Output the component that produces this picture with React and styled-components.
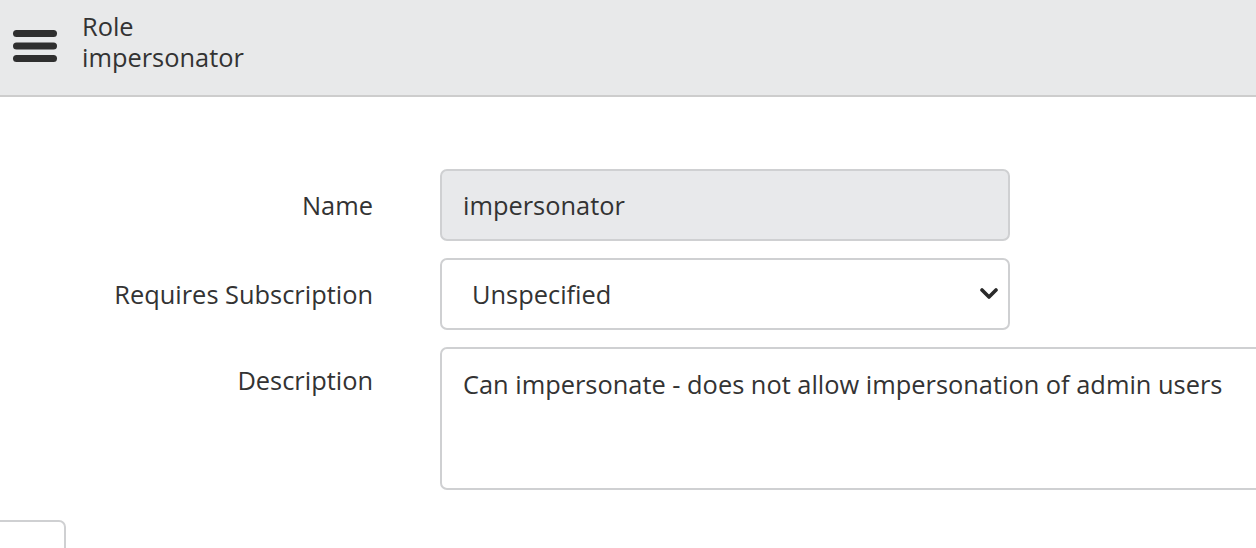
import React from 'react'
import styled, { createGlobalStyle } from 'styled-components'

const GlobalStyle = createGlobalStyle`
  html, body {
    margin: 0;
    padding: 0;
    background: #fff;
    overflow: hidden;
  }
  body {
    font-family: "Open Sans", "Liberation Sans", sans-serif;
    color: #333;
  }
`

// hamburger drawn as three rounded bars
const MenuIcon = () => (
  <svg width="46" height="36" viewBox="0 0 46 36">
    <rect x="1" y="2" width="44" height="7" rx="3.5" fill="#2f2f2f" />
    <rect x="1" y="14.5" width="44" height="7" rx="3.5" fill="#2f2f2f" />
    <rect x="1" y="27" width="44" height="7" rx="3.5" fill="#2f2f2f" />
  </svg>
)

const Chevron = () => (
  <svg width="18" height="12" viewBox="0 0 18 12">
    <path d="M2 2 L9 9 L16 2" fill="none" stroke="#2a2a2a" strokeWidth="3.6" strokeLinecap="round" strokeLinejoin="round" />
  </svg>
)

export default function App() {
  return (
    <Page>
      <GlobalStyle />
      <Header>
        <MenuButton>
          <MenuIcon />
        </MenuButton>
        <Titles>
          <Title>Role</Title>
          <Title>impersonator</Title>
        </Titles>
      </Header>
      <Form>
        <Row>
          <Label>Name</Label>
          <Field disabled>impersonator</Field>
        </Row>
        <Row>
          <Label>Requires Subscription</Label>
          <Select>
            <span>Unspecified</span>
            <Chevron />
          </Select>
        </Row>
        <Row top>
          <Label top>Description</Label>
          <TextArea>Can impersonate - does not allow impersonation of admin users</TextArea>
        </Row>
      </Form>
      <Footer>
        <SaveButton />
      </Footer>
    </Page>
  )
}

const Page = styled.div`
  width: 1256px;
  height: 548px;
  overflow: hidden;
`

const Header = styled.header`
  height: 95px;
  background: #e8e9ea;
  border-bottom: 2px solid #cdcdcd;
  display: flex;
  align-items: center;
  padding-left: 12px;
`

const MenuButton = styled.div`
  display: flex;
  align-items: center;
  margin-right: 24px;
  margin-top: -4px;
`

const Titles = styled.div`
  display: flex;
  flex-direction: column;
  margin-top: -12px;
`

const Title = styled.div`
  font-size: 25.4px;
  line-height: 31px;
  color: #333;
`

const Form = styled.div`
  padding-top: 72px;
  display: flex;
  flex-direction: column;
  gap: 17px;
`

const Row = styled.div`
  display: grid;
  grid-template-columns: 373px 1fr;
  column-gap: 67px;
  align-items: ${p => (p.top ? 'start' : 'center')};
`

const Label = styled.label`
  text-align: right;
  font-size: 25.4px;
  color: #333;
  padding-top: ${p => (p.top ? '16px' : '0')};
`

const Field = styled.div`
  width: 570px;
  height: 72px;
  box-sizing: border-box;
  border: 2px solid #cfd0d2;
  border-radius: 7px;
  background: ${p => (p.disabled ? '#e8e9eb' : '#fff')};
  display: flex;
  align-items: center;
  padding-left: 21px;
  font-size: 25.4px;
  color: #333;
`

const Select = styled(Field)`
  justify-content: space-between;
  padding-left: 30px;
  padding-right: 10px;
`

const TextArea = styled.div`
  width: 900px;
  height: 143px;
  box-sizing: border-box;
  border: 2px solid #cfd0d2;
  border-radius: 7px;
  padding: 18px 21px;
  font-size: 25.4px;
  color: #333;
`

const Footer = styled.div`
  padding-top: 30px;
`

const SaveButton = styled.div`
  margin-left: -10px;
  width: 76px;
  height: 40px;
  box-sizing: border-box;
  border: 2px solid #cfd0d2;
  border-radius: 7px;
  background: #fff;
`
